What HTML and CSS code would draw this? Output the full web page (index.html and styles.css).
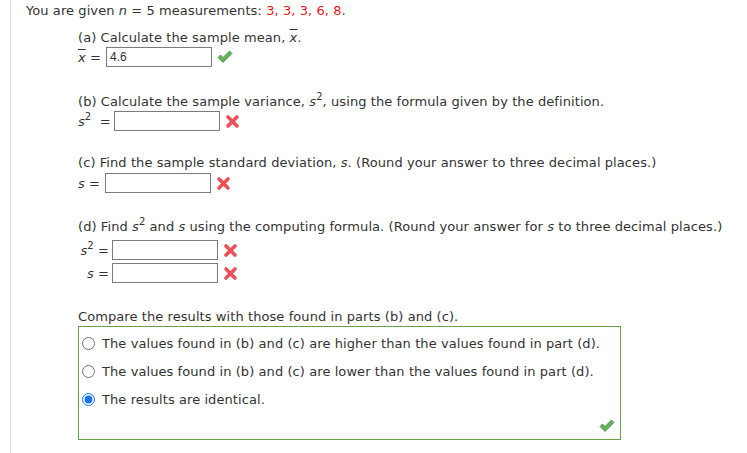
FILE: index.html
```html
<!DOCTYPE html>
<html lang="en">
<head>
  <meta charset="UTF-8">
  <title>Sample Statistics</title>
  <link rel="stylesheet" href="styles.css">
</head>
<body>
  <div class="page">
    <p class="intro">You are given <i>n</i> = 5 measurements: <span class="red">3, 3, 3, 6, 8</span>.</p>

    <div class="part part-a">
      <p class="q">(a) Calculate the sample mean, <i class="bar">x</i>.</p>
      <div class="row">
        <span class="lbl"><i class="bar">x</i> =</span>
        <input type="text" class="answer" value="4.6">
        <svg class="mark" width="16" height="14" viewBox="0 0 16 14"><path d="M1 7.5 L3.5 5 L6 7.5 L12.5 1 L15 3.5 L6 12.5 Z" fill="#64b35a" stroke="#3f8a3a" stroke-width="0.8" stroke-linejoin="round"/></svg>
      </div>
    </div>

    <div class="part part-b">
      <p class="q">(b) Calculate the sample variance, <i>s</i><sup>2</sup>, using the formula given by the definition.</p>
      <div class="row">
        <span class="lbl lbl-wide"><i>s</i><sup>2</sup> &nbsp;=</span>
        <input type="text" class="answer">
        <svg class="mark" width="15" height="15" viewBox="0 0 15 15"><path d="M3 3 L12 12 M12 3 L3 12" stroke="#ec5058" stroke-width="3.6" stroke-linecap="round"/></svg>
      </div>
    </div>

    <div class="part part-c">
      <p class="q">(c) Find the sample standard deviation, <i>s</i>. (Round your answer to three decimal places.)</p>
      <div class="row">
        <span class="lbl"><i>s</i> =</span>
        <input type="text" class="answer">
        <svg class="mark" width="15" height="15" viewBox="0 0 15 15"><path d="M3 3 L12 12 M12 3 L3 12" stroke="#ec5058" stroke-width="3.6" stroke-linecap="round"/></svg>
      </div>
    </div>

    <div class="part part-d">
      <p class="q">(d) Find <i>s</i><sup>2</sup> and <i>s</i> using the computing formula. (Round your answer for <i>s</i> to three decimal places.)</p>
      <div class="row">
        <span class="lbl lbl-right"><i>s</i><sup>2</sup> =</span>
        <input type="text" class="answer">
        <svg class="mark" width="15" height="15" viewBox="0 0 15 15"><path d="M3 3 L12 12 M12 3 L3 12" stroke="#ec5058" stroke-width="3.6" stroke-linecap="round"/></svg>
      </div>
      <div class="row row-next">
        <span class="lbl lbl-right"><i>s</i> =</span>
        <input type="text" class="answer">
        <svg class="mark" width="15" height="15" viewBox="0 0 15 15"><path d="M3 3 L12 12 M12 3 L3 12" stroke="#ec5058" stroke-width="3.6" stroke-linecap="round"/></svg>
      </div>
    </div>

    <div class="part part-e">
      <p class="q">Compare the results with those found in parts (b) and (c).</p>
      <div class="choices">
        <label class="choice"><input type="radio" name="cmp"> The values found in (b) and (c) are higher than the values found in part (d).</label>
        <label class="choice"><input type="radio" name="cmp"> The values found in (b) and (c) are lower than the values found in part (d).</label>
        <label class="choice"><input type="radio" name="cmp" checked> The results are identical.</label>
        <svg class="box-mark" width="16" height="14" viewBox="0 0 16 14"><path d="M1 7.5 L3.5 5 L6 7.5 L12.5 1 L15 3.5 L6 12.5 Z" fill="#64b35a" stroke="#3f8a3a" stroke-width="0.8" stroke-linejoin="round"/></svg>
      </div>
    </div>
  </div>
</body>
</html>
```

FILE: styles.css
```css
body {
  margin: 0;
  font-family: "DejaVu Sans", Verdana, sans-serif;
  font-size: 13px;
  letter-spacing: 0.08px;
  color: #333;
  background-color: #fff;
}

.page {
  margin-left: 10px;
  border-left: 1px solid #ddd;
  padding: 2px 0 20px 15px;
  min-height: 431px;
}

p {
  margin: 0;
  line-height: 18px;
}

.red {
  color: #e8161b;
}

sup {
  font-size: 10px;
  line-height: 0;
  vertical-align: 6px;
}

.bar {
  text-decoration: overline;
}

.part {
  margin-left: 52px;
}

.part-a { margin-top: 9px; }
.part-b { margin-top: 26px; }
.part-c { margin-top: 23px; }
.part-d { margin-top: 25px; }
.part-e { margin-top: 25px; }

.row {
  display: flex;
  align-items: center;
  height: 20px;
}

.part-c .row { margin-top: 1px; }
.part-d .row { margin-top: 4px; }
.part-d .row-next { margin-top: 3px; }

.lbl {
  margin-right: 5px;
  white-space: nowrap;
}

.lbl-wide,
.lbl-right {
  margin-right: 3px;
}

.lbl-right {
  width: 31px;
  text-align: right;
}

.answer {
  box-sizing: border-box;
  width: 106px;
  height: 20px;
  margin: 0;
  padding: 0 3px;
  border: 1px solid #7b7b7b;
  font-family: "Liberation Sans", Arial, sans-serif;
  font-size: 12px;
  letter-spacing: 0;
  color: #333;
}

.mark {
  margin-left: 5px;
}

.choices {
  position: relative;
  width: 541px;
  height: 110px;
  padding-top: 2px;
  border: 1px solid #68a045;
  box-sizing: content-box;
}

.choice {
  display: flex;
  align-items: center;
  height: 28px;
}

.choice input {
  width: 13px;
  height: 13px;
  margin: 0 7px 0 3px;
  accent-color: #1a73e8;
}

.box-mark {
  position: absolute;
  right: 5px;
  bottom: 6px;
}
```
